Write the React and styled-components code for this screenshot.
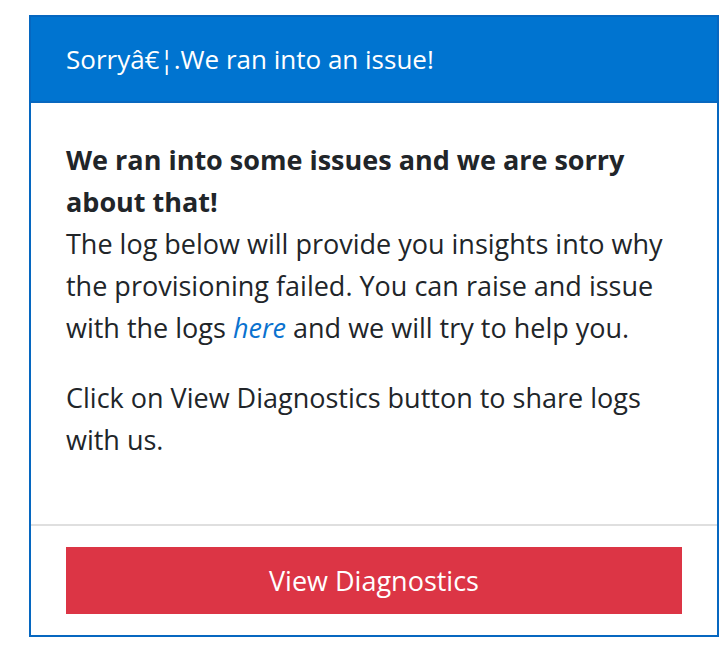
import React from 'react'
import styled, { createGlobalStyle } from 'styled-components'

const GlobalStyle = createGlobalStyle`
  html, body {
    margin: 0;
    background: #ffffff;
  }
  body {
    font-family: "Open Sans", "Noto Sans", "Liberation Sans", sans-serif;
    color: #212529;
  }
`

function App() {
  return (
    <Page>
      <GlobalStyle />
      <Card>
        <CardHeader>Sorryâ€¦.We ran into an issue!</CardHeader>
        <CardBody>
          <Para>
            <Strong>We ran into some issues and we are sorry about that!</Strong>
            <br />
            The log below will provide you insights into why the provisioning failed. You can raise
            and issue with the logs <Link href="#">here</Link> and we will try to help you.
          </Para>
          <Para>Click on View Diagnostics button to share logs with us.</Para>
        </CardBody>
        <CardFooter>
          <DangerButton type="button">View Diagnostics</DangerButton>
        </CardFooter>
      </Card>
    </Page>
  )
}

export default App

const Page = styled.div`
  padding: 15px 0 0 29px;
`

const Card = styled.div`
  width: 690px;
  box-sizing: border-box;
  border: 2px solid #0667c0;
  background: #fff;
`

const CardHeader = styled.div`
  background: #0074d0;
  color: #fff;
  font-size: 26px;
  line-height: 42px;
  padding: 21px 35px;
  border-bottom: 2px solid #0868bf;
`

const CardBody = styled.div`
  padding: 36px 35px 7px;
  font-size: 27px;
  line-height: 42px;
  border-bottom: 2px solid #dfdfdf;
`

const Para = styled.p`
  margin: 0 0 28px;

  &:last-child {
    margin-bottom: 56px;
  }
`

const Strong = styled.b`
  font-weight: 700;
`

const Link = styled.a`
  color: #0a72cf;
  font-style: italic;
  text-decoration: none;
`

const CardFooter = styled.div`
  padding: 21px 35px;
`

const DangerButton = styled.button`
  display: block;
  width: 100%;
  height: 67px;
  border: none;
  background: #dc3545;
  color: #fff;
  font-family: inherit;
  font-size: 27px;
  line-height: 42px;
  padding: 0;
  cursor: pointer;
`
